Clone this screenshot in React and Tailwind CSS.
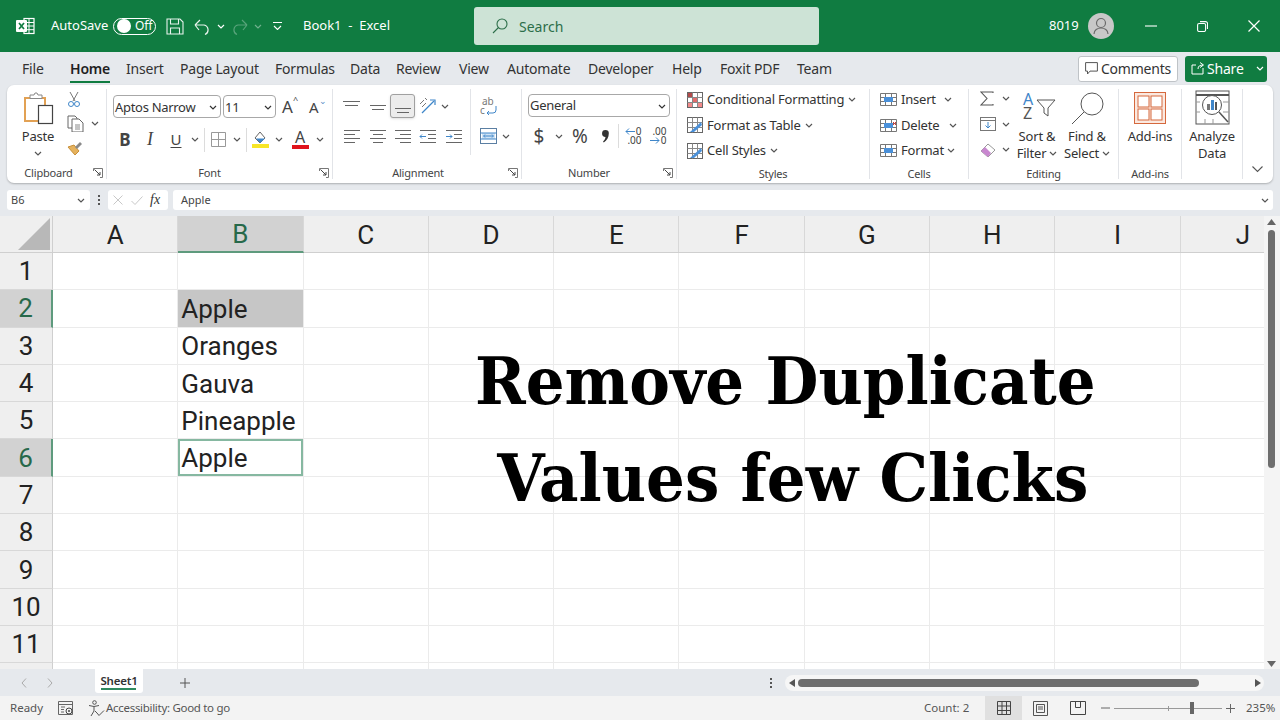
import React from "react";

const S = ({ w, h, className = "", children }) => (
  <svg width={w} height={h} viewBox={`0 0 ${w} ${h}`} fill="none" className={"shrink-0 " + className}>{children}</svg>
);

const Ch = ({ c = "#555" }) => (
  <S w={8} h={5}><path d="M1 1l3 3 3-3" stroke={c} strokeWidth="1.2" /></S>
);

const Slot = ({ className, children }) => <div className={"flex items-center justify-center shrink-0 " + className}>{children}</div>;

const Launcher = () => (
  <S w={10} h={10}>
    <path d="M.5 3V.5h9v9H7" stroke="#777" />
    <path d="M1.5 1.5L7 7M7 4v3H4" stroke="#444" />
  </S>
);

const Group = ({ className, label, launcher, labelClass = "", children }) => (
  <div className={"flex flex-col shrink-0 h-[90px] border-r border-[#e2e4e8] " + className}>
    <div className="h-[75px] shrink-0">{children}</div>
    <div className={"relative h-[18px] shrink-0 flex items-center justify-center text-[11px] tracking-[-0.2px] text-[#444] " + labelClass}>
      {label}
      {launcher && <div className="absolute right-[3px] top-[4px]"><Launcher /></div>}
    </div>
  </div>
);

const LinesIcon = ({ lines, children }) => (
  <S w={18} h={18}>
    {lines.map(([a, b, y], i) => <path key={i} d={`M${a} ${y + 0.5}H${b}`} stroke="#666" />)}
    {children}
  </S>
);

const tabs = [
  ["File", "w-[22px]", "mr-[26px]"], ["Home", "w-[39px]", "mr-[17px]"], ["Insert", "w-[36px]", "mr-[18px]"],
  ["Page Layout", "w-[78px]", "mr-[17px]"], ["Formulas", "w-[59px]", "mr-[16px]"], ["Data", "w-[30px]", "mr-[16px]"],
  ["Review", "w-[45px]", "mr-[18px]"], ["View", "w-[31px]", "mr-[17px]"], ["Automate", "w-[63px]", "mr-[18px]"],
  ["Developer", "w-[67px]", "mr-[17px]"], ["Help", "w-[30px]", "mr-[18px]"], ["Foxit PDF", "w-[60px]", "mr-[17px]"], ["Team", "w-[34px]", ""],
];

const Title = () => (
  <div className="flex items-center h-[52px] bg-[#107c41] text-white text-[13px] pl-[16px] shrink-0">
    <S w={19} h={18} className="mr-[16px]">
      <rect x="8" y="1.5" width="10" height="15" stroke="#fff" strokeWidth="1.2" />
      <path d="M8 5.5h10M8 9h10M8 12.7h10M13 1.5v15" stroke="#fff" />
      <rect x="0" y="3" width="11" height="12" rx="1" fill="#fff" />
      <path d="M3 6l5 6M8 6l-5 6" stroke="#107c41" strokeWidth="1.7" />
    </S>
    <span className="w-[62px]">AutoSave</span>
    <div className="w-[43px] h-[17px] rounded-full border border-white flex items-center pl-[1px] mr-[10px]">
      <div className="w-[14px] h-[14px] rounded-full bg-white mr-[4px] ml-[2px]" />
      <span className="text-[12px]">Off</span>
    </div>
    <S w={18} h={17} className="mr-[10px]">
      <path d="M1 1h13l3 3v12H1z M4.5 1v5h8V1 M4.5 16v-6h9v6" stroke="#fff" strokeWidth="1.1" opacity=".9" />
    </S>
    <S w={17} h={17} className="mr-[6px]">
      <path d="M1 7h9a5 5 0 0 1 1 9.500M1 7l5-5M1 7l4 5" stroke="#fff" strokeWidth="1.2" opacity=".9" />
    </S>
    <div className="mr-[6px]"><Ch c="#fff" /></div>
    <S w={17} h={17} className="mr-[6px]">
      <path d="M16 7H7a5 5 0 0 0-1 9.500M16 7l-5-5M16 7l-4 5" stroke="#fff" strokeWidth="1.2" opacity=".3" />
    </S>
    <div className="mr-[11px] opacity-40"><Ch c="#fff" /></div>
    <S w={9} h={8} className="mr-[21px]">
      <path d="M0 .5h9M1 4l3.500 3.500L8 4" stroke="#fff" strokeWidth="1.1" />
    </S>
    <span className="w-[171px] whitespace-pre">Book1  -  Excel</span>
    <div className="flex items-center w-[345px] h-[38px] bg-[#cde3d6] rounded-[3px] pl-[18px] text-[#2c6e49] text-[14px]">
      <S w={16} h={16} className="mr-[11px]">
        <circle cx="10" cy="6" r="5" stroke="#2c6e49" strokeWidth="1.1" />
        <path d="M6.500 9.500L1 15" stroke="#2c6e49" strokeWidth="1.1" />
      </S>
      Search
    </div>
    <span className="ml-[230px] w-[39px]">8019</span>
    <div className="w-[26px] h-[26px] rounded-full bg-[#c8c8c8] flex items-center justify-center mr-[31px]">
      <S w={18} h={18}>
        <circle cx="9" cy="6" r="4.500" stroke="#6b6b6b" strokeWidth="1.2" />
        <path d="M2 17c0-8 14-8 14 0" stroke="#6b6b6b" strokeWidth="1.2" />
      </S>
    </div>
    <S w={12} h={2} className="mr-[40px]"><path d="M0 1h12" stroke="#fff" strokeWidth="1.1" /></S>
    <S w={11} h={11} className="mr-[40px]">
      <rect x=".6" y="2.500" width="8" height="8" rx="1.500" stroke="#fff" strokeWidth="1.1" />
      <path d="M3 .6h5.500a2 2 0 0 1 2 2V8" stroke="#fff" strokeWidth="1.1" />
    </S>
    <S w={12} h={12}><path d="M.5.500l11 11M11.500.500l-11 11" stroke="#fff" strokeWidth="1.2" /></S>
  </div>
);

const TabRow = () => (
  <div className="flex items-center h-[33px] pl-[22px] text-[14px] tracking-[-0.2px] text-[#333] shrink-0">
    {tabs.map(([t, w, m]) => (
      <div key={t} className={"relative whitespace-nowrap shrink-0 " + w + " " + m + (t === "Home" ? " font-semibold text-[#1f1f1f]" : "")}>
        {t}
        {t === "Home" && <div className="absolute left-0 right-[-1px] top-[23px] h-[2px] bg-[#107c41]" />}
      </div>
    ))}
    <div className="ml-[247px] flex items-center justify-center w-[100px] h-[26px] bg-white border border-[#bfc3c7] rounded-[3px] mr-[7px]">
      <S w={13} h={13} className="mr-[3px]">
        <path d="M.6.600h11.800v8.500H5L2.500 12V9.100H.6z" stroke="#555" />
      </S>
      Comments
    </div>
    <div className="flex items-center w-[82px] h-[26px] bg-[#107c41] rounded-[3px] text-white pl-[6px]">
      <S w={13} h={13} className="mr-[3px]">
        <path d="M12 6v6H1V3h4M7 7c0-3 2-4 5-4M9 .500L12.500 3 9 5.500" stroke="#fff" />
      </S>
      <span className="w-[49px]">Share</span>
      <Ch c="#fff" />
    </div>
  </div>
);

const SelectBox = ({ className, text }) => (
  <div className={"flex items-center justify-between h-[23px] bg-white border border-[#a8a8a8] rounded-[4px] pl-[1px] pr-[3px] pt-[1px] text-[13px] tracking-[-0.3px] text-[#333] shrink-0 " + className}>
    <span className="whitespace-nowrap">{text}</span>
    <Ch c="#333" />
  </div>
);

const Sep = () => <div className="w-px h-[24px] bg-[#dcdcdc] shrink-0" />;

const Clipboard = () => (
  <Group className="w-[100px]" label={<span className="mr-[16px]">Clipboard</span>} launcher>
    <div className="flex h-full">
      <div className="w-[62px] flex flex-col items-center text-[13px] tracking-[-0.2px] text-[#333]">
        <div className="h-[38px] pt-[3px]">
          <S w={31} h={33}>
            <path d="M2 6h20v23H2z" fill="#fff" stroke="#e2a154" strokeWidth="2" />
            <path d="M7 6V3h4l1-2h2l1 2h4v3.500H7z" fill="#fff" stroke="#888" />
            <rect x="15.500" y="13.500" width="14" height="18" fill="#fff" stroke="#444" strokeWidth="1.2" />
          </S>
        </div>
        <span className="leading-[17px] mt-[1px]">Paste</span>
        <div className="mt-[6px]"><Ch /></div>
      </div>
      <div className="flex flex-col items-start pt-[2px] -ml-[2px]">
        <S w={14} h={17}>
          <path d="M3 1l5 9M11 1L6 10" stroke="#777" />
          <circle cx="4" cy="13" r="2.500" stroke="#3f86c9" />
          <circle cx="10" cy="13" r="2.500" stroke="#3f86c9" />
        </S>
        <div className="flex items-center mt-[7px]">
          <S w={18} h={17}>
            <path d="M1 1h7l2 2v10H1z" stroke="#666" fill="#fff" />
            <path d="M5 4h7l4 4v9H5z" stroke="#666" fill="#fff" />
            <path d="M8 10h5M8 12h5M8 14h5" stroke="#888" />
          </S>
          <div className="ml-[6px]"><Ch /></div>
        </div>
        <S w={16} h={14} className="mt-[9px]">
          <path d="M1 6l6-2 5 6-4 4z" fill="#e5b25d" stroke="#c8903a" />
          <path d="M8 6l5-5 2 2-5 5z" fill="#8a8a8a" />
        </S>
      </div>
    </div>
  </Group>
);

const Font = () => (
  <Group className="w-[226px]" label={<span className="mr-[20px]">Font</span>} launcher>
    <div className="pl-[6px] pt-[5px]">
      <div className="flex items-center">
        <SelectBox className="w-[108px] mr-[2px]" text="Aptos Narrow" />
        <SelectBox className="w-[53px]" text="11" />
        <div className="ml-[6px] text-[17px] text-[#444] flex items-start w-[27px]">A<span className="text-[9px] leading-[12px] text-[#444]">^</span></div>
        <div className="text-[15px] text-[#444] flex items-start">A<span className="text-[9px] leading-[10px] text-[#5a8fc7]">⌄</span></div>
      </div>
      <div className="flex items-center mt-[8px] h-[24px] text-[#444]">
        <Slot className="w-[24px] font-bold text-[17px]">B</Slot>
        <Slot className="w-[26px] text-[18px] italic font-['Liberation_Serif',serif]">I</Slot>
        <Slot className="w-[26px] text-[15px] underline underline-offset-2">U</Slot>
        <Slot className="w-[12px]"><Ch /></Slot>
        <div className="w-[3px]" /><Sep />
        <Slot className="w-[26px]">
          <S w={15} h={15}><path d="M.5.500h14v14H.5zM7.500.500v14M.5 7.500h14" stroke="#999" /></S>
        </Slot>
        <Slot className="w-[12px]"><Ch /></Slot>
        <div className="w-[3px]" /><Sep />
        <Slot className="w-[26px]">
          <S w={17} h={17}>
            <path d="M8 1L3 7l5 5 5-5z" stroke="#666" fill="#fff" />
            <path d="M4 7.500h9L8 12z" fill="#3f86c9" />
            <rect x="0" y="13" width="17" height="4" fill="#f7e627" />
          </S>
        </Slot>
        <Slot className="w-[12px]"><Ch /></Slot>
        <Slot className="w-[30px] relative">
          <div className="flex flex-col items-center">
            <span className="text-[16px] leading-[15px]">A</span>
            <div className="w-[17px] h-[4px] bg-[#e0141c]" />
          </div>
        </Slot>
        <Slot className="w-[10px]"><Ch /></Slot>
      </div>
    </div>
  </Group>
);

const Alignment = () => (
  <Group className="w-[189px]" label={<span className="mr-[18px]">Alignment</span>} launcher>
    <div className="flex h-full">
      <div className="w-[138px] h-[66px] border-r border-[#e2e4e8] pl-[6px] pt-[5px]">
        <div className="flex items-center h-[24px]">
          <Slot className="w-[26px]"><LinesIcon lines={[[0, 17, 4], [2, 15, 8]]} /></Slot>
          <Slot className="w-[25px]"><LinesIcon lines={[[1, 17, 8], [3, 15, 12]]} /></Slot>
          <Slot className="w-[25px] h-[24px] border border-[#a0a0a0] bg-[#ececec] rounded-[3px] shadow-sm">
            <LinesIcon lines={[[1, 17, 11], [3, 15, 15]]} />
          </Slot>
          <Slot className="w-[26px]">
            <S w={18} h={18}>
              <path d="M3 16L15 4" stroke="#3f86c9" strokeWidth="1.2" />
              <path d="M11 3h5v5" stroke="#3f86c9" strokeWidth="1.2" />
              <path d="M1 7l4-4M3 10l4-4M6 1l2 2" stroke="#777" />
            </S>
          </Slot>
          <Slot className="w-[8px]"><Ch /></Slot>
        </div>
        <div className="flex items-center h-[24px] mt-[6px]">
          <Slot className="w-[26px]"><LinesIcon lines={[[1, 17, 3], [1, 12, 7], [1, 17, 11], [1, 12, 15]]} /></Slot>
          <Slot className="w-[25px]"><LinesIcon lines={[[1, 17, 3], [4, 14, 7], [1, 17, 11], [4, 14, 15]]} /></Slot>
          <Slot className="w-[25px]"><LinesIcon lines={[[1, 17, 3], [6, 17, 7], [1, 17, 11], [6, 17, 15]]} /></Slot>
          <Slot className="w-[26px]">
            <LinesIcon lines={[[1, 17, 3], [9, 17, 7], [9, 17, 11], [1, 17, 15]]}>
              <path d="M1 9.500h6M3 7.500l-2 2 2 2" stroke="#3f86c9" />
            </LinesIcon>
          </Slot>
          <Slot className="w-[25px]">
            <LinesIcon lines={[[1, 17, 3], [9, 17, 7], [9, 17, 11], [1, 17, 15]]}>
              <path d="M1 9.500h6M5 7.500l2 2-2 2" stroke="#3f86c9" />
            </LinesIcon>
          </Slot>
        </div>
      </div>
      <div className="pl-[9px] pt-[5px]">
        <div className="flex items-center h-[24px]">
          <div className="relative w-[17px] h-[18px] text-[10px] leading-[9px] text-[#777]">
            <div className="pl-[2px]">ab</div>
            <div>c</div>
            <div className="absolute right-0 bottom-0">
              <S w={11} h={9}><path d="M10 0v4a3 3 0 0 1-3 3H1M3 5L1 7l2 2" stroke="#3f86c9" /></S>
            </div>
          </div>
        </div>
        <div className="flex items-center h-[24px] mt-[6px]">
          <S w={17} h={16}>
            <rect x=".5" y=".5" width="16" height="15" stroke="#5b7fa3" />
            <rect x="2" y="5" width="13" height="6" fill="#cfe3f5" />
            <path d="M.5 5h16M.5 11h16M4 8h9M5 6.500L3.500 8 5 9.500M12 6.500L13.500 8 12 9.500" stroke="#3f86c9" />
          </S>
          <div className="ml-[5px]"><Ch /></div>
        </div>
      </div>
    </div>
  </Group>
);

const NumberG = () => (
  <Group className="w-[155px]" label={<span className="mr-[20px]">Number</span>} launcher>
    <div className="pl-[6px] pt-[5px]">
      <SelectBox className="w-[142px]" text="General" />
      <div className="flex items-center h-[26px] mt-[6px] text-[#444]">
        <Slot className="w-[22px] text-[19px]">$</Slot>
        <Slot className="w-[18px]"><Ch /></Slot>
        <Slot className="w-[24px] text-[19px]">%</Slot>
        <Slot className="w-[26px]">
          <S w={7} h={13}><path d="M3.500 0a3.300 3.300 0 0 1 3.300 3.500c0 4-2 7-5 9l-.8-1c1.500-1.300 2.300-2.700 2.500-4.600A3.400 3.400 0 0 1 3.500 0z" fill="#333" /></S>
        </Slot>
        <Sep />
        <Slot className="w-[26px]">
          <div className="w-[19px] text-[10px] leading-[9px] text-[#444]">
            <div className="flex items-center justify-end">
              <S w={10} h={7} className="mr-[1px]"><path d="M10 3.500H1M4 .5l-3 3 3 3" stroke="#3f86c9" /></S>0
            </div>
            <div className="text-right">.00</div>
          </div>
        </Slot>
        <Slot className="w-[24px]">
          <div className="w-[19px] text-[10px] leading-[9px] text-[#444]">
            <div className="text-right">.00</div>
            <div className="flex items-center justify-end">
              <S w={10} h={7} className="mr-[1px]"><path d="M0 3.500h9M6 .5l3 3-3 3" stroke="#3f86c9" /></S>0
            </div>
          </div>
        </Slot>
      </div>
    </div>
  </Group>
);

const StyleTable = ({ kind }) => (
  <S w={16} h={16}>
    <rect x=".5" y=".5" width="15" height="15" stroke="#666" fill="#fff" />
    {kind === "cf" && (
      <>
        <rect x="1" y="1" width="5" height="5" fill="#b24b4b" />
        <rect x="6" y="6" width="5" height="5" fill="#e26b6b" />
        <rect x="1" y="10" width="5" height="5" fill="#f28a8a" />
        <rect x="10" y="10" width="5" height="5" fill="#f28a8a" />
      </>
    )}
    <path d="M.5 5.500h15M.5 10.500h15M5.500.500v15M10.500.500v15" stroke="#888" />
    {kind !== "cf" && <path d="M3 15L14 5l1 3L7 15z" fill="#4a90d9" />}
  </S>
);

const Styles = () => (
  <Group className="w-[193px]" label="Styles" labelClass="pt-[2px]">
    <div className="pl-[10px] -mt-[2px] text-[13px] tracking-[-0.2px] text-[#333]">
      {[["cf", "Conditional Formatting"], ["t", "Format as Table"], ["cell", "Cell Styles"]].map(([k, t]) => (
        <div key={k} className="flex items-center h-[25.5px]">
          <StyleTable kind={k} />
          <span className="ml-[4px] mr-[4px] whitespace-nowrap">{t}</span>
          <Ch />
        </div>
      ))}
    </div>
  </Group>
);

const CellIcon = ({ c, x }) => (
  <S w={17} h={15}>
    <path d="M.5 1.500h16v12H.5zM.5 5.500h16M.5 9.500h16M5.500 1.500v12M11.500 1.500v12" stroke="#777" />
    <rect x="4" y="5" width="9" height="5" fill={c} />
    {x && <path d="M13 4l3 3M16 4l-3 3" stroke="#e0352b" />}
  </S>
);

const Cells = () => (
  <Group className="w-[99px]" label="Cells" labelClass="pt-[2px]">
    <div className="pl-[10px] -mt-[2px] text-[13px] tracking-[-0.2px] text-[#333]">
      {[["Insert", "w-[43px]", "#4a90d9", false], ["Delete", "w-[48px]", "#4a90d9", true], ["Format", "w-[46px]", "#4a90d9", false]].map(([t, w, c, x]) => (
        <div key={t} className="flex items-center h-[25.5px]">
          <CellIcon c={c} x={x} />
          <span className={"ml-[4px] " + w}>{t}</span>
          <Ch />
        </div>
      ))}
    </div>
  </Group>
);

const Editing = () => (
  <Group className="w-[150px]" label="Editing" labelClass="pt-[2px]">
    <div className="flex h-full text-[13px] tracking-[-0.2px] text-[#333]">
      <div className="w-[48px] pl-[11px] -mt-[3px]">
        <div className="flex items-center h-[25.5px]">
          <S w={14} h={15}><path d="M13 2V1H1l6 6.500L1 14h12v-1" stroke="#555" strokeWidth="1.1" /></S>
          <div className="ml-[8px]"><Ch /></div>
        </div>
        <div className="flex items-center h-[25.5px]">
          <S w={16} h={14}>
            <rect x=".5" y=".5" width="15" height="13" stroke="#777" />
            <path d="M.5 3.500h15" stroke="#777" />
            <path d="M8 5v6M5.500 8.500L8 11l2.500-2.500" stroke="#3f86c9" />
          </S>
          <div className="ml-[6px]"><Ch /></div>
        </div>
        <div className="flex items-center h-[25.5px]">
          <S w={16} h={14}>
            <path d="M1 8l7-7 7 6-7 7z" fill="#fff" stroke="#999" />
            <path d="M1 8l4-4 6 6-3 4z" fill="#c887cf" />
          </S>
          <div className="ml-[6px]"><Ch /></div>
        </div>
      </div>
      <div className="w-[40px] flex flex-col items-center">
        <div className="relative h-[39px] w-[34px] pt-[3px] pl-[3px] text-[16px] leading-[14px]">
          <div className="text-[#3f86c9]">A</div>
          <div className="text-[#555]">Z</div>
          <div className="absolute right-[-2px] top-[10px]">
            <S w={20} h={18}><path d="M1 1h18l-7 8v8l-4-3V9z" stroke="#555" fill="#fff" /></S>
          </div>
        </div>
        <span className="leading-[17px] whitespace-nowrap">Sort &amp;</span>
        <span className="leading-[17px] whitespace-nowrap flex items-center">Filter <span className="ml-[3px]"><Ch /></span></span>
      </div>
      <div className="w-[60px] flex flex-col items-center">
        <div className="h-[39px] pt-[3px]">
          <S w={33} h={33}>
            <circle cx="21" cy="12" r="11" stroke="#555" fill="#fff" />
            <path d="M13 20L1 32" stroke="#555" />
          </S>
        </div>
        <span className="leading-[17px] whitespace-nowrap">Find &amp;</span>
        <span className="leading-[17px] whitespace-nowrap flex items-center">Select <span className="ml-[3px]"><Ch /></span></span>
      </div>
    </div>
  </Group>
);

const AddIns = () => (
  <Group className="w-[63px]" label="Add-ins" labelClass="pt-[2px]">
    <div className="flex flex-col items-center text-[13px] tracking-[-0.2px] text-[#333]">
      <div className="h-[39px] pt-[3px]">
        <S w={32} h={32}>
          <rect x=".5" y=".5" width="31" height="31" fill="#fbe9e0" stroke="#d5683d" />
          <rect x="4" y="4" width="11" height="11" fill="#fff" stroke="#d5683d" />
          <rect x="17" y="4" width="11" height="11" fill="#fff" stroke="#d5683d" />
          <rect x="4" y="17" width="11" height="11" fill="#fff" stroke="#d5683d" />
          <rect x="17" y="17" width="11" height="11" fill="#fff" stroke="#d5683d" />
        </S>
      </div>
      <span className="leading-[17px]">Add-ins</span>
    </div>
  </Group>
);

const Analyze = () => (
  <Group className="w-[61px]" label="">
    <div className="flex flex-col items-center text-[13px] tracking-[-0.2px] text-[#333]">
      <div className="h-[39px] pt-[1px]">
        <S w={35} h={35}>
          <rect x="1" y="1" width="33" height="33" stroke="#555" fill="#fff" />
          <path d="M1 5h33" stroke="#555" strokeWidth="2" />
          <path d="M1 12h4M1 22h4M28 12h6M28 22h6M10 29v5M18 29v5" stroke="#999" />
          <circle cx="17" cy="15" r="9.500" stroke="#555" fill="#fff" />
          <rect x="12" y="14" width="3" height="6" fill="#777" />
          <rect x="16" y="10" width="3" height="10" fill="#3f86c9" />
          <rect x="20" y="12" width="2" height="8" fill="#555" />
          <path d="M24 22l9 10" stroke="#555" strokeWidth="1.500" />
        </S>
      </div>
      <span className="leading-[17px]">Analyze</span>
      <span className="leading-[17px]">Data</span>
    </div>
  </Group>
);

const Ribbon = () => (
  <div className="mx-[7px] h-[98px] bg-white rounded-[7px] shadow-[0_1px_2px_rgba(0,0,0,0.25)] pt-[4px] flex shrink-0">
    <Clipboard />
    <Font />
    <Alignment />
    <NumberG />
    <Styles />
    <Cells />
    <Editing />
    <AddIns />
    <Analyze />
    <div className="flex-1 flex items-end justify-end pb-[10px] pr-[10px]">
      <S w={11} h={7}><path d="M.5.500l5 5 5-5" stroke="#555" strokeWidth="1.100" /></S>
    </div>
  </div>
);

const FormulaBar = () => (
  <div className="flex items-center h-[20px] mt-[7px] mx-[7px] text-[11px] text-[#444] shrink-0">
    <div className="flex items-center justify-between w-[83px] h-full bg-white rounded-[3px] pl-[4px] pr-[5px]">
      B6 <Ch />
    </div>
    <div className="w-[18px] flex flex-col items-center gap-[2px]">
      <div className="w-[2px] h-[2px] bg-[#555]" /><div className="w-[2px] h-[2px] bg-[#555]" /><div className="w-[2px] h-[2px] bg-[#555]" />
    </div>
    <div className="flex items-center w-[60px] h-full bg-white rounded-[3px] pl-[5px]">
      <S w={10} h={10} className="mr-[8px]"><path d="M.5.500l9 9M9.500.500l-9 9" stroke="#c8c8c8" /></S>
      <S w={12} h={9} className="mr-[7px]"><path d="M.5 5l3.500 3.500L11.500.500" stroke="#c8c8c8" /></S>
      <span className="italic text-[14px] font-['Liberation_Serif',serif] leading-none text-[#333]">fx</span>
    </div>
    <div className="flex items-center justify-between flex-1 h-full bg-white rounded-[3px] ml-[5px] pl-[8px] pr-[4px]">
      Apple <Ch />
    </div>
  </div>
);

const cols = ["A", "B", "C", "D", "E", "F", "G", "H", "I", "J"];
const values = { 2: "Apple", 3: "Oranges", 4: "Gauva", 5: "Pineapple", 6: "Apple" };

const Sheet = () => (
  <div className="flex flex-1 min-h-0 mt-[6px]">
    <div className="relative flex-1 bg-white overflow-hidden font-['Roboto',sans-serif] text-[#222]">
      <div className="flex h-[37px] bg-[#efefef] border-b border-[#cfcfcf]">
        <div className="w-[53px] shrink-0 border-r border-[#cfcfcf] flex items-end justify-end pr-[2px] pb-[2px]">
          <div className="w-[32px] h-[32px] bg-[#b8b8b8] [clip-path:polygon(100%_0,100%_100%,0_100%)]" />
        </div>
        {cols.map((c) => (
          <div key={c} className={"w-[125.3px] shrink-0 flex items-center justify-center text-[26px] pt-[2px] border-r border-[#d8d8d8] " + (c === "B" ? "bg-[#d2d2d2] text-[#27694a] border-b-2 border-b-[#5e9a7d] h-[37px]" : "")}>{c}</div>
        ))}
      </div>
      {[1, 2, 3, 4, 5, 6, 7, 8, 9, 10, 11, 12].map((r) => {
        const sel = r === 2 || r === 6;
        return (
          <div key={r} className="flex h-[37.3px]">
            <div className={"w-[53px] shrink-0 flex items-center justify-center text-[26px] pt-[1px] border-b border-[#d8d8d8] " + (sel ? "bg-[#d2d2d2] text-[#27694a] border-r-2 border-r-[#5e9a7d]" : "bg-[#efefef] border-r border-r-[#cfcfcf]")}>
              {r === 12 ? "" : r}
            </div>
            {cols.map((c) => (
              <div key={c} className={"relative w-[125.3px] shrink-0 flex items-center border-r border-b border-[#ebebeb] pl-[3px] pt-[2px] text-[26px] whitespace-nowrap " + (c === "B" && r === 2 ? "bg-[#c6c6c6]" : "")}>
                {c === "B" && values[r]}
                {c === "B" && r === 6 && <div className="absolute inset-0 border-2 border-[#86b8a1]" />}
              </div>
            ))}
          </div>
        );
      })}
      <div className="absolute left-[475px] top-[117px] origin-left scale-x-[0.925] text-black text-[66px] leading-[97px] font-bold font-['DejaVu_Serif',serif] whitespace-pre">
        <div>Remove Duplicate</div>
        <div className="pl-[24px]">Values few Clicks</div>
      </div>
    </div>
    <div className="w-[16px] shrink-0 bg-[#f4f4f4] flex flex-col items-center justify-between pt-[3px] pb-[2px] pr-[1px]">
      <div className="flex flex-col items-center">
        <S w={9} h={6} className="mb-[5px]"><path d="M4.500 0L9 6H0z" fill="#666" /></S>
        <div className="w-[7px] h-[238px] bg-[#6e6e6e] rounded-full" />
      </div>
      <S w={9} h={6}><path d="M4.500 6L9 0H0z" fill="#666" /></S>
    </div>
  </div>
);

const SheetBar = () => (
  <div className="flex items-center h-[27px] shrink-0 text-[#333]">
    <S w={6} h={10} className="ml-[21px] mr-[20px]"><path d="M5 .5L1 5l4 4.500" stroke="#aaa" /></S>
    <S w={6} h={10} className="mr-[42px]"><path d="M1 .5L5 5 1 9.500" stroke="#aaa" /></S>
    <div className="relative w-[48px] h-[24px] bg-white rounded-b-[3px] text-[11.5px] tracking-[-0.2px] font-semibold flex justify-center pt-[3px] self-start">
      Sheet1
      <div className="absolute left-[6px] right-[7px] top-[19px] h-[2px] bg-[#2f8a5f]" />
    </div>
    <S w={10} h={10} className="ml-[37px] mr-[580px]"><path d="M5 0v10M0 5h10" stroke="#555" /></S>
    <div className="flex flex-col gap-[2px] mr-[13px]">
      <div className="w-[2px] h-[2px] bg-[#555]" /><div className="w-[2px] h-[2px] bg-[#555]" /><div className="w-[2px] h-[2px] bg-[#555]" />
    </div>
    <div className="flex items-center w-[479px] h-[16px] bg-[#f6f6f6] rounded-full pl-[4px] pr-[2px]">
      <S w={6} h={8} className="mr-[3px]"><path d="M0 4l6-4v8z" fill="#555" /></S>
      <div className="w-[401px] h-[8px] bg-[#6e6e6e] rounded-full" />
      <S w={6} h={8} className="ml-[56px]"><path d="M6 4L0 0v8z" fill="#555" /></S>
    </div>
  </div>
);

const StatusBar = () => (
  <div className="flex items-center h-[24px] bg-[#f3f3f3] text-[11.5px] text-[#555] shrink-0 pl-[10px]">
    <span className="w-[48px]">Ready</span>
    <S w={16} h={16} className="mr-[14px]">
      <path d="M.5 1.500h14v13H.5zM.5 4.500h14" stroke="#666" />
      <path d="M3 7h4M3 9.500h3M3 12h3" stroke="#666" />
      <circle cx="11" cy="11" r="3" stroke="#444" />
      <circle cx="11" cy="11" r="1" fill="#444" />
    </S>
    <S w={17} h={17} className="mr-[1px]">
      <circle cx="6.500" cy="2.500" r="1.800" stroke="#555" />
      <path d="M1 5.500l5 1 5-1M6 7v4l-3 5M7 11l2 2" stroke="#555" />
      <path d="M9 13l2 2.500 5-5" stroke="#555" />
    </S>
    <span className="w-[818px] whitespace-nowrap tracking-[-0.3px]">Accessibility: Good to go</span>
    <span className="w-[61px] whitespace-nowrap">Count: 2</span>
    <div className="w-[37px] h-[24px] bg-[#e0e0e0] flex items-center justify-center mr-[11px]">
      <S w={14} h={14}><path d="M.5.500h13v13H.5zM.5 5h13M.5 9.500h13M5 .5v13M9.500.500v13" stroke="#444" /></S>
    </div>
    <S w={15} h={15} className="mr-[22px]">
      <path d="M.5.500h14v14H.5z" stroke="#555" />
      <path d="M3.500 3.500h8v8h-8zM5 6h5M5 8h5" stroke="#555" />
    </S>
    <S w={16} h={14} className="mr-[15px]"><path d="M.5.500h15v13H.5zM5.500.500v6h5v-6" stroke="#444" /></S>
    <S w={9} h={2} className="mr-[4px]"><path d="M0 1h9" stroke="#666" /></S>
    <div className="relative w-[108px] h-[1px] bg-[#999] mr-[4px]">
      <div className="absolute left-[54px] top-[-2px] w-px h-[5px] bg-[#999]" />
      <div className="absolute left-[76px] top-[-6px] w-[4px] h-[12px] bg-[#666]" />
    </div>
    <S w={9} h={9} className="mr-[11px]"><path d="M4.500 0v9M0 4.500h9" stroke="#666" /></S>
    <span>235%</span>
  </div>
);

export default function App() {
  return (
    <div className="flex flex-col w-[1280px] h-[720px] overflow-hidden bg-[#e6e9ed] font-['Noto_Sans',sans-serif]">
      <Title />
      <TabRow />
      <Ribbon />
      <FormulaBar />
      <Sheet />
      <SheetBar />
      <StatusBar />
    </div>
  );
}
